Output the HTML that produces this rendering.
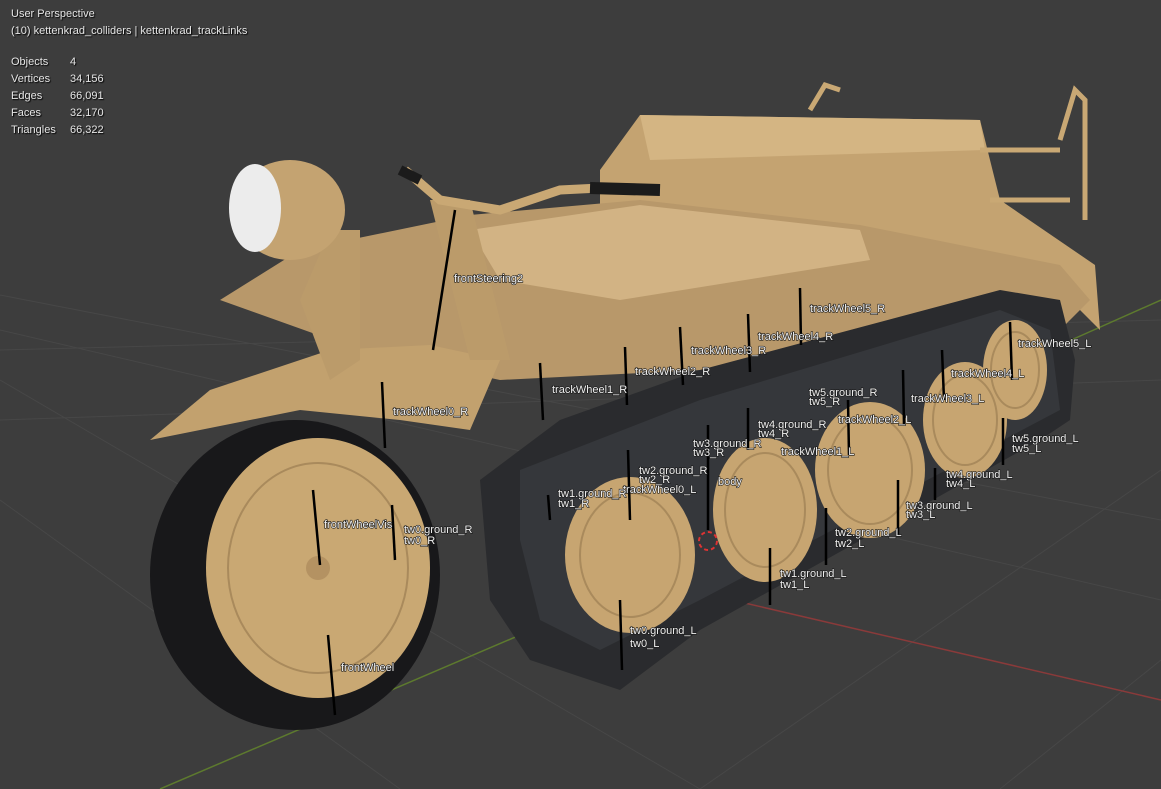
<!DOCTYPE html>
<html><head><meta charset="utf-8"><style>
html,body{margin:0;padding:0;background:#3d3d3d;width:1161px;height:789px;overflow:hidden}
svg{position:absolute;left:0;top:0}
.t{font-family:"Liberation Sans",sans-serif;font-size:11px;fill:#f0f0f0;paint-order:stroke;stroke:#1a1a1a;stroke-width:1.2px}
.h{position:absolute;font-family:"Liberation Sans",sans-serif;font-size:11px;color:#e6e6e6;text-shadow:1px 1px 1px #000}
</style></head><body>
<svg width="1161" height="789" viewBox="0 0 1161 789">
<g stroke="#474747" stroke-width="1" fill="none">
<line x1="0" y1="330" x2="1161" y2="600"/><line x1="0" y1="295" x2="1161" y2="520"/><line x1="0" y1="380" x2="700" y2="789"/>
<line x1="0" y1="500" x2="400" y2="789"/><line x1="700" y1="789" x2="1161" y2="470"/><line x1="1000" y1="789" x2="1161" y2="660"/>
<line x1="0" y1="420" x2="1161" y2="380"/><line x1="0" y1="350" x2="1161" y2="320"/>
</g>
<line x1="560" y1="560" x2="1161" y2="700" stroke="#8a3a3a" stroke-width="1.5"/>
<line x1="160" y1="789" x2="520" y2="635" stroke="#5d7a2e" stroke-width="1.5"/>
<line x1="1060" y1="345" x2="1161" y2="300" stroke="#5d7a2e" stroke-width="1.5"/>
<polygon points="600,170 640,115 980,120 1000,200 1095,265 1100,330 1060,290 900,300 600,330" fill="#c4a371"/>
<polygon points="640,115 980,120 985,150 650,160" fill="#d4b583"/>
<path d="M810,110 L825,85 L840,90 M1060,140 L1075,90 L1085,100 L1085,220 M980,150 L1060,150 M990,200 L1070,200" stroke="#c9a874" stroke-width="5" fill="none"/>
<polygon points="220,300 300,250 470,215 640,200 860,225 1060,265 1090,300 1060,330 700,370 500,380 360,350" fill="#b8986a"/>
<polygon points="470,230 640,205 860,230 870,260 620,300 500,280" fill="#d2b384"/>
<polygon points="480,480 560,420 700,370 1000,290 1060,300 1075,360 1070,420 1040,440 700,630 620,690 530,660 490,600" fill="#2a2b2e"/>
<polygon points="520,470 700,400 1000,310 1050,330 1060,410 700,600 600,650 540,620 520,540" fill="#35373b"/>
<ellipse cx="630" cy="555" rx="65" ry="78" fill="#c7a571"/>
<ellipse cx="765" cy="510" rx="52" ry="72" fill="#c7a571"/>
<ellipse cx="870" cy="470" rx="55" ry="68" fill="#c7a571"/>
<ellipse cx="965" cy="420" rx="42" ry="58" fill="#c7a571"/>
<ellipse cx="1015" cy="370" rx="32" ry="50" fill="#c7a571"/>
<g fill="none" stroke="#a98a5c" stroke-width="2">
<ellipse cx="630" cy="555" rx="50" ry="62"/><ellipse cx="765" cy="510" rx="40" ry="57"/><ellipse cx="870" cy="470" rx="42" ry="54"/><ellipse cx="965" cy="420" rx="32" ry="45"/><ellipse cx="1015" cy="370" rx="24" ry="38"/>
</g>
<polygon points="150,440 210,390 330,350 430,345 500,360 470,430 400,420 300,410 200,430" fill="#c2a16e"/>
<polygon points="300,300 330,230 360,230 360,360 330,380" fill="#bb9b6a"/>
<polygon points="430,200 470,200 510,360 470,360" fill="#bb9b6a"/>
<ellipse cx="295" cy="575" rx="145" ry="155" fill="#18181a"/>
<ellipse cx="318" cy="568" rx="112" ry="130" fill="#c9a873"/>
<ellipse cx="318" cy="568" rx="90" ry="105" fill="none" stroke="#a98a5c" stroke-width="2"/>
<circle cx="318" cy="568" r="12" fill="#b49262"/>
<ellipse cx="290" cy="210" rx="55" ry="50" fill="#c4a371"/>
<ellipse cx="255" cy="208" rx="26" ry="44" fill="#ececec"/>
<path d="M405,170 L440,200 L500,210 L560,190 L600,188" stroke="#c9a874" stroke-width="9" fill="none"/>
<path d="M590,188 L660,190" stroke="#1b1b1b" stroke-width="12"/>
<path d="M400,170 L420,180" stroke="#1b1b1b" stroke-width="10"/>
<circle cx="708" cy="541" r="9" fill="none" stroke="#d33" stroke-width="2" stroke-dasharray="4 3"/>
<g stroke="#000" stroke-width="2.5">
<line x1="455" y1="210" x2="433" y2="350"/><line x1="382" y1="382" x2="385" y2="448"/><line x1="540" y1="363" x2="543" y2="420"/>
<line x1="625" y1="347" x2="627" y2="405"/><line x1="680" y1="327" x2="683" y2="385"/><line x1="748" y1="314" x2="750" y2="372"/>
<line x1="800" y1="288" x2="801" y2="345"/><line x1="313" y1="490" x2="320" y2="565"/><line x1="392" y1="505" x2="395" y2="560"/>
<line x1="328" y1="635" x2="335" y2="715"/><line x1="548" y1="495" x2="550" y2="520"/><line x1="620" y1="600" x2="622" y2="670"/>
<line x1="770" y1="548" x2="770" y2="605"/><line x1="826" y1="508" x2="826" y2="565"/><line x1="898" y1="480" x2="898" y2="535"/>
<line x1="935" y1="468" x2="935" y2="500"/><line x1="1003" y1="418" x2="1003" y2="465"/><line x1="1010" y1="322" x2="1012" y2="380"/>
<line x1="903" y1="370" x2="904" y2="425"/><line x1="942" y1="350" x2="944" y2="400"/><line x1="848" y1="400" x2="849" y2="455"/>
<line x1="708" y1="425" x2="708" y2="530"/><line x1="628" y1="450" x2="630" y2="520"/><line x1="748" y1="408" x2="748" y2="450"/>
</g>
<g class="t">
<text x="454" y="282">frontSteering2</text><text x="393" y="415">trackWheel0_R</text><text x="552" y="393">trackWheel1_R</text>
<text x="635" y="375">trackWheel2_R</text><text x="691" y="354">trackWheel3_R</text><text x="758" y="340">trackWheel4_R</text>
<text x="810" y="312">trackWheel5_R</text><text x="1018" y="347">trackWheel5_L</text><text x="951" y="377">trackWheel4_L</text>
<text x="911" y="402">trackWheel3_L</text><text x="838" y="423">trackWheel2_L</text><text x="781" y="455">trackWheel1_L</text>
<text x="623" y="493">trackWheel0_L</text><text x="718" y="485">body</text>
<text x="809" y="396">tw5.ground_R</text><text x="809" y="405">tw5_R</text>
<text x="758" y="428">tw4.ground_R</text><text x="758" y="437">tw4_R</text>
<text x="693" y="447">tw3.ground_R</text><text x="693" y="456">tw3_R</text>
<text x="639" y="474">tw2.ground_R</text><text x="639" y="483">tw2_R</text>
<text x="558" y="497">tw1.ground_R</text><text x="558" y="507">tw1_R</text>
<text x="404" y="533">tw0.ground_R</text><text x="404" y="544">tw0_R</text>
<text x="324" y="528">frontWheelVis</text><text x="341" y="671">frontWheel</text>
<text x="1012" y="442">tw5.ground_L</text><text x="1012" y="452">tw5_L</text>
<text x="946" y="478">tw4.ground_L</text><text x="946" y="487">tw4_L</text>
<text x="906" y="509">tw3.ground_L</text><text x="906" y="518">tw3_L</text>
<text x="835" y="536">tw2.ground_L</text><text x="835" y="547">tw2_L</text>
<text x="780" y="577">tw1.ground_L</text><text x="780" y="588">tw1_L</text>
<text x="630" y="634">tw0.ground_L</text><text x="630" y="647">tw0_L</text>
</g>
</svg>
<div class="h" style="left:11px;top:8px">User Perspective</div>
<div class="h" style="left:11px;top:25px">(10) kettenkrad_colliders | kettenkrad_trackLinks</div>
<div class="h" style="left:11px;top:54px;line-height:17px">Objects<br>Vertices<br>Edges<br>Faces<br>Triangles</div>
<div class="h" style="left:70px;top:54px;line-height:17px">4<br>34,156<br>66,091<br>32,170<br>66,322</div>
</body></html>
